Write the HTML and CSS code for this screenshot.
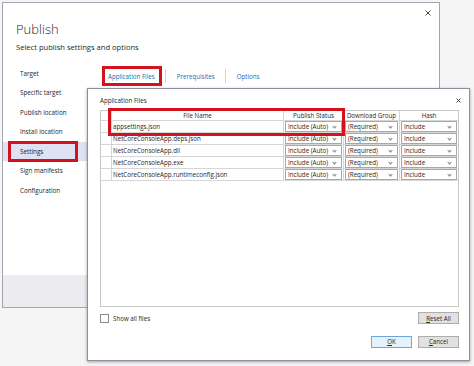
FILE: index.html
```html
<!doctype html>
<html lang="en">
  <head>
    <meta charset="UTF-8" />
    <title>Publish</title>
    <link rel="stylesheet" href="styles.css">
  </head>
  <body>
    <div class="window">
      <div class="win-bar">
        <svg class="close" width="6" height="6" viewBox="0 0 6 6"><path d="M0.5 0.5L5.5 5.5M5.5 0.5L0.5 5.5" stroke="#333" stroke-width="0.9" /></svg>
      </div>
      <h1 class="title">Publish</h1>
      <p class="subtitle">Select publish settings and options</p>
      <div class="main">
        <ul class="nav">
          <li>Target</li>
          <li>Specific target</li>
          <li>Publish location</li>
          <li>Install location</li>
          <li class="active">Settings</li>
          <li>Sign manifests</li>
          <li>Configuration</li>
        </ul>
        <div class="content">
          <div class="tabs">
            <span class="tab">Application Files</span>
            <span class="sep"></span>
            <span class="tab">Prerequisites</span>
            <span class="sep"></span>
            <span class="tab">Options</span>
          </div>
        </div>
      </div>
      <div class="footer"></div>
    </div>

    <div class="dialog">
      <div class="dialog-head">
        <span>Application Files</span>
        <svg class="close" width="5" height="5" viewBox="0 0 5 5"><path d="M0.5 0.5L4.5 4.5M4.5 0.5L0.5 4.5" stroke="#333" stroke-width="0.9" /></svg>
      </div>
      <div class="list">
        <div class="cell"></div>
        <div class="cell head">File Name</div>
        <div class="cell head">Publish Status</div>
        <div class="cell head">Download Group</div>
        <div class="cell head">Hash</div>

        <div class="cell"></div>
        <div class="cell name">appsettings.json</div>
        <div class="cell"><div class="select">Include (Auto)</div></div>
        <div class="cell"><div class="select">(Required)</div></div>
        <div class="cell"><div class="select">Include</div></div>

        <div class="cell"></div>
        <div class="cell name">NetCoreConsoleApp.deps.json</div>
        <div class="cell"><div class="select">Include (Auto)</div></div>
        <div class="cell"><div class="select">(Required)</div></div>
        <div class="cell"><div class="select">Include</div></div>

        <div class="cell"></div>
        <div class="cell name">NetCoreConsoleApp.dll</div>
        <div class="cell"><div class="select">Include (Auto)</div></div>
        <div class="cell"><div class="select">(Required)</div></div>
        <div class="cell"><div class="select">Include</div></div>

        <div class="cell"></div>
        <div class="cell name">NetCoreConsoleApp.exe</div>
        <div class="cell"><div class="select">Include (Auto)</div></div>
        <div class="cell"><div class="select">(Required)</div></div>
        <div class="cell"><div class="select">Include</div></div>

        <div class="cell"></div>
        <div class="cell name">NetCoreConsoleApp.runtimeconfig.json</div>
        <div class="cell"><div class="select">Include (Auto)</div></div>
        <div class="cell"><div class="select">(Required)</div></div>
        <div class="cell"><div class="select">Include</div></div>
      </div>
      <div class="options-row">
        <label class="check"><span class="box"></span>Show all files</label>
        <button class="btn"><u>R</u>eset All</button>
      </div>
      <div class="actions">
        <button class="btn primary"><u>O</u>K</button>
        <button class="btn"><u>C</u>ancel</button>
      </div>
    </div>

    <!-- red callouts drawn over the screenshot -->
    <div class="mark mark-tab"></div>
    <div class="mark mark-settings"></div>
    <div class="mark mark-row"></div>
  </body>
</html>
```
FILE: styles.css
```css
* {
  box-sizing: border-box;
  margin: 0;
  padding: 0;
}

body {
  position: relative;
  height: 366px;
  overflow: hidden;
  padding: 2px 0 0 2px;
  background: #f5f5f5;
  color: #262626;
  font-family: 'Open Sans', sans-serif;
}

.window {
  width: 438px;
  height: 306px;
  display: flex;
  flex-direction: column;
  background: #fff;
  border: 1px solid #a3a6b1;
}

.win-bar {
  height: 18px;
  display: flex;
  justify-content: flex-end;
  align-items: center;
  padding: 2px 8px 0 0;
}

.title {
  padding-left: 13px;
  font-size: 13px;
  font-weight: 300;
  line-height: 16px;
}

.subtitle {
  margin-top: 3.5px;
  padding-left: 13px;
  font-size: 7.6px;
  line-height: 12px;
}

.main {
  flex: 1;
  display: flex;
  margin-top: 11px;
}

.nav {
  width: 84px;
  list-style: none;
}

.nav li {
  height: 19.5px;
  line-height: 19.5px;
  padding-left: 17px;
  font-size: 6.3px;
}

.nav li.active {
  background: #dee2f2;
}

.content {
  flex: 1;
  padding-top: 3.5px;
}

.tabs {
  height: 18px;
  display: flex;
  align-items: center;
  padding-left: 15px;
}

.tab {
  padding: 0 6px;
  font-size: 6.2px;
  color: #1f6ab3;
}

.sep {
  width: 1px;
  height: 14px;
  margin: 0 5px 0 4px;
  background: #d3d3d3;
}

.footer {
  height: 32px;
  background: #ececf0;
}

/* Application Files dialog */
.dialog {
  position: absolute;
  left: 87px;
  top: 88px;
  width: 383px;
  height: 273px;
  display: flex;
  flex-direction: column;
  padding: 0 10px 0 12px;
  background: #fff;
  border: 1px solid #8d909c;
  box-shadow: 0 1px 3px rgba(0, 0, 0, 0.35);
  font-size: 6.2px;
}

.dialog-head {
  height: 21px;
  display: flex;
  justify-content: space-between;
  align-items: center;
  padding-top: 2px;
}

.dialog-head .close {
  margin-right: -2px;
}

.list {
  height: 197px;
  display: grid;
  grid-template-columns: 11px 172px 60px 56px 1fr;
  grid-template-rows: 10px;
  grid-auto-rows: 12px;
  align-content: start;
  border: 1px solid #c9c9c9;
}

.cell {
  border-right: 1px solid #d6d6d6;
  border-bottom: 1px solid #d6d6d6;
  line-height: 11px;
  white-space: nowrap;
  overflow: hidden;
}

.cell:nth-child(5n) {
  border-right: none;
}

.cell.head {
  line-height: 9px;
  text-align: center;
}

.cell.name {
  padding-left: 1px;
}

.select {
  position: relative;
  height: 11px;
  margin: 0 1px;
  padding-left: 2px;
  line-height: 9px;
  border: 1px solid #a8a8a8;
}

.select::after {
  content: "";
  position: absolute;
  right: 5px;
  top: 2.5px;
  width: 2px;
  height: 2px;
  border-right: 1px solid #777;
  border-bottom: 1px solid #777;
  transform: rotate(45deg);
}

.options-row {
  height: 12px;
  margin-top: 5px;
  display: flex;
  justify-content: space-between;
  align-items: center;
}

.check {
  display: flex;
  align-items: center;
  gap: 4px;
}

.box {
  width: 9px;
  height: 9px;
  border: 1px solid #8a8a8a;
  background: #fff;
}

.btn {
  width: 41px;
  height: 12.5px;
  font-family: inherit;
  font-size: 6.2px;
  color: #262626;
  background: #e1e1e1;
  border: 1px solid #adadad;
}

.btn.primary {
  background: #e5f1fb;
  border-color: #6ea6dd;
}

.actions {
  margin-top: 11.5px;
  display: flex;
  justify-content: flex-end;
  gap: 6px;
}

.mark {
  position: absolute;
  border: 3px solid #d3121e;
}

.mark-tab {
  left: 102px;
  top: 66px;
  width: 60px;
  height: 20px;
}

.mark-settings {
  left: 8px;
  top: 141px;
  width: 70px;
  height: 21px;
}

.mark-row {
  left: 108px;
  top: 108px;
  width: 237px;
  height: 28px;
}
```
